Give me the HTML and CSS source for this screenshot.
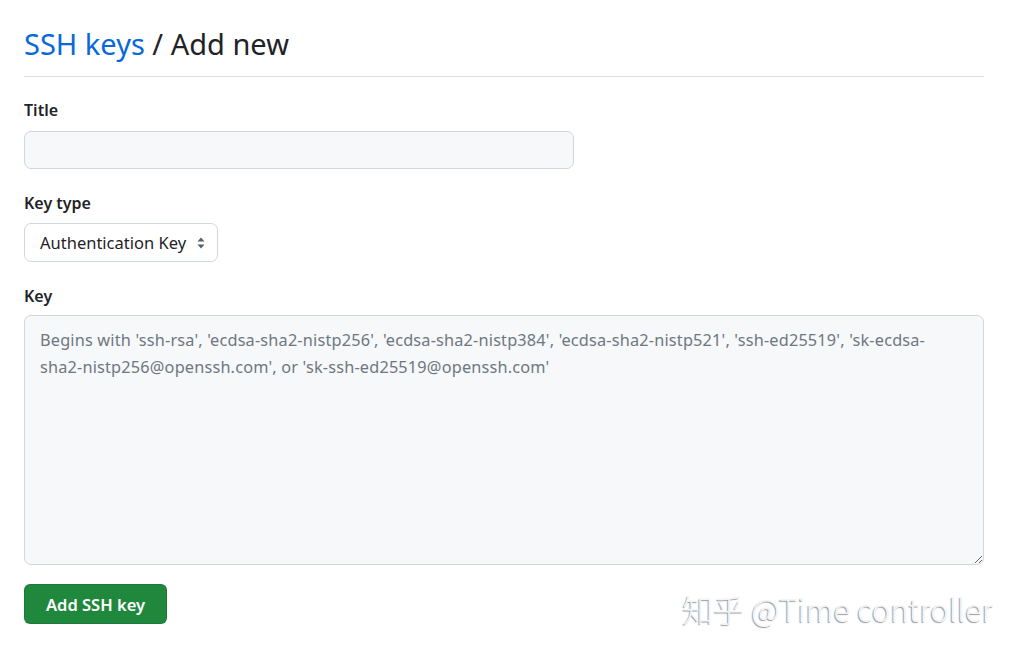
FILE: index.html
```html
<!DOCTYPE html>
<html lang="en">
<head>
<meta charset="utf-8">
<title>SSH keys / Add new</title>
<link rel="stylesheet" href="styles.css">
</head>
<body>
<main class="page">
  <h1 class="subhead"><a class="crumb" href="#">SSH keys</a> / Add new</h1>
  <form class="form">
    <div class="field">
      <label class="label label-title" for="title">Title</label>
      <input class="input input-title" id="title" type="text">
    </div>
    <div class="field">
      <label class="label" for="type">Key type</label>
      <div class="select">
        <span class="select-text">Authentication Key</span>
        <svg class="select-arrow" width="8" height="14" viewBox="0 0 8 14"><path d="M4 1.5 L7.5 5.5 H0.5 Z" fill="#57606a"/><path d="M4 12.5 L7.5 8.5 H0.5 Z" fill="#57606a"/></svg>
      </div>
    </div>
    <div class="field">
      <label class="label label-key" for="key">Key</label>
      <textarea class="input textarea" id="key" placeholder="Begins with 'ssh-rsa', 'ecdsa-sha2-nistp256', 'ecdsa-sha2-nistp384', 'ecdsa-sha2-nistp521', 'ssh-ed25519', 'sk-ecdsa-&#10;sha2-nistp256@openssh.com', or 'sk-ssh-ed25519@openssh.com'"></textarea>
    </div>
    <div class="actions">
      <button class="btn" type="button">Add SSH key</button>
      <span class="watermark">知乎 @Time controller</span>
    </div>
  </form>
</main>
</body>
</html>
```

FILE: styles.css
```css
html, body {
  margin: 0;
  padding: 0;
  background: #ffffff;
}
body {
  font-family: "Noto Sans", "Open Sans", "Liberation Sans", sans-serif;
  color: #1f2328;
}
.page {
  width: 960px;
  padding: 25px 0 0 24px;
}
.subhead {
  margin: 0;
  font-size: 29px;
  font-weight: 400;
  line-height: 38px;
  padding-bottom: 13px;
  border-bottom: 1px solid #d8dee4;
}
.crumb {
  color: #0969da;
  text-decoration: none;
}
.form {
  display: flex;
  flex-direction: column;
  padding-top: 21px;
}
.field {
  display: flex;
  flex-direction: column;
  align-items: flex-start;
  margin-bottom: 22px;
}
.label {
  font-size: 16px;
  font-weight: 600;
  line-height: 24px;
  margin-bottom: 8px;
}
.label-title {
  margin-bottom: 9px;
}
.label-key {
  margin-bottom: 7px;
}
.input {
  box-sizing: border-box;
  border: 1px solid #d0d7de;
  border-radius: 7px;
  background: #f6f8fa;
  font-family: inherit;
}
.input-title {
  width: 550px;
  height: 38px;
}
.select {
  box-sizing: border-box;
  display: flex;
  align-items: center;
  gap: 11px;
  height: 39px;
  padding: 0 12px 0 15px;
  border: 1px solid #d0d7de;
  border-radius: 7px;
  background: #ffffff;
}
.select-text {
  font-size: 16.5px;
  color: #1f2328;
}
.textarea {
  width: 960px;
  height: 250px;
  padding: 11px 15px;
  font-size: 16.3px;
  line-height: 27px;
  resize: vertical;
  letter-spacing: 0.18px;
}
.textarea::placeholder {
  color: #6e7781;
}
.actions {
  display: flex;
  align-items: flex-start;
  justify-content: space-between;
  margin-top: -3px;
}
.btn {
  height: 40px;
  padding: 0 21px;
  border: 1px solid rgba(31, 35, 40, 0.15);
  border-radius: 6px;
  background: #1f883d;
  color: #ffffff;
  font-family: inherit;
  font-size: 16.5px;
  font-weight: 600;
}
.watermark {
  font-size: 31px;
  line-height: 40px;
  margin-top: 5px;
  color: #f5f5f5;
  margin-right: -9px;
  font-family: "Noto Sans CJK SC", "Noto Sans", sans-serif;
  font-weight: 300;
  text-shadow: -1px 1px 1px #9a9a9a;
}
```
